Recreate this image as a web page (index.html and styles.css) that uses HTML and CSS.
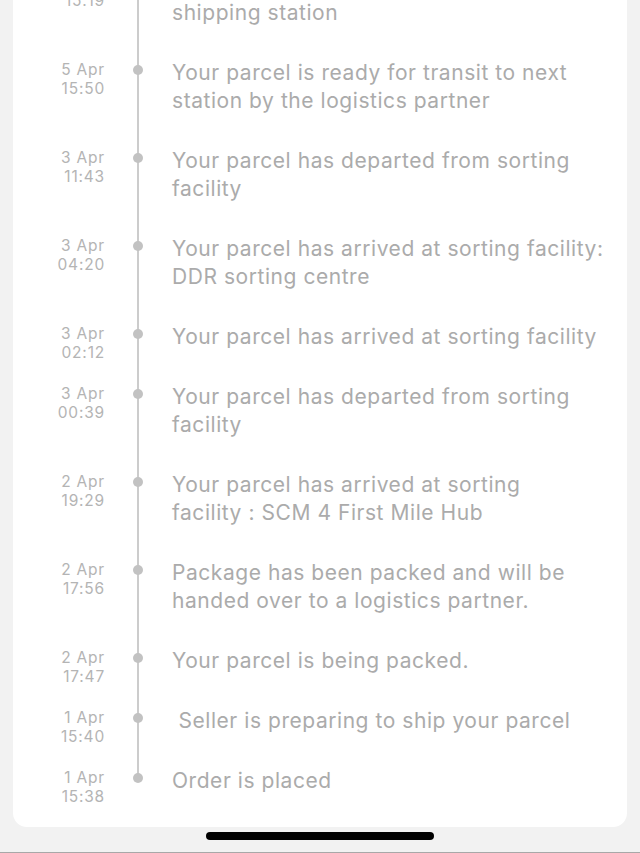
FILE: index.html
```html
<!DOCTYPE html>
<html lang="en">
<head>
    <meta charset="UTF-8">
    <meta name="viewport" content="width=device-width, initial-scale=1.0">
    <title>Parcel Tracking</title>
    <link rel="stylesheet" href="styles.css">
</head>
<body>
    <div class="card">
        <div class="event">
            <div class="date">5 Apr<br>15:19</div>
            <div class="track"><span class="dot"></span></div>
            <div class="message">Your parcel has arrived at first mile shipping station</div>
        </div>
        <div class="event">
            <div class="date">5 Apr<br>15:50</div>
            <div class="track"><span class="dot"></span></div>
            <div class="message">Your parcel is ready for transit to next station by the logistics partner</div>
        </div>
        <div class="event">
            <div class="date">3 Apr<br>11:43</div>
            <div class="track"><span class="dot"></span></div>
            <div class="message">Your parcel has departed from sorting facility</div>
        </div>
        <div class="event">
            <div class="date">3 Apr<br>04:20</div>
            <div class="track"><span class="dot"></span></div>
            <div class="message">Your parcel has arrived at sorting facility: DDR sorting centre</div>
        </div>
        <div class="event">
            <div class="date">3 Apr<br>02:12</div>
            <div class="track"><span class="dot"></span></div>
            <div class="message">Your parcel has arrived at sorting facility</div>
        </div>
        <div class="event">
            <div class="date">3 Apr<br>00:39</div>
            <div class="track"><span class="dot"></span></div>
            <div class="message">Your parcel has departed from sorting facility</div>
        </div>
        <div class="event">
            <div class="date">2 Apr<br>19:29</div>
            <div class="track"><span class="dot"></span></div>
            <div class="message">Your parcel has arrived at sorting facility&nbsp;: SCM 4 First Mile Hub</div>
        </div>
        <div class="event">
            <div class="date">2 Apr<br>17:56</div>
            <div class="track"><span class="dot"></span></div>
            <div class="message">Package has been packed and will be handed over to a logistics partner.</div>
        </div>
        <div class="event">
            <div class="date">2 Apr<br>17:47</div>
            <div class="track"><span class="dot"></span></div>
            <div class="message">Your parcel is being packed.</div>
        </div>
        <div class="event">
            <div class="date">1 Apr<br>15:40</div>
            <div class="track"><span class="dot"></span></div>
            <div class="message">&nbsp;Seller is preparing to ship your parcel</div>
        </div>
        <div class="event last">
            <div class="date">1 Apr<br>15:38</div>
            <div class="track"><span class="dot"></span></div>
            <div class="message">Order is placed</div>
        </div>
    </div>

    <div class="home-bar">
        <div class="indicator"></div>
    </div>
</body>
</html>
```

FILE: styles.css
```css
body {
    margin: 0;
    background-color: #f2f2f2;
    font-family: Inter, "Noto Sans", sans-serif;
}
.card {
    margin: -29px 13px 0 13px;
    background-color: #ffffff;
    border-radius: 0 0 14px 14px;
}
.event {
    display: grid;
    grid-template-columns: 92px 67px 1fr;
    padding-bottom: 32px;
}
.date {
    max-height: 27px;
    padding-top: 1px;
    text-align: right;
    font-size: 15.5px;
    line-height: 19px;
    letter-spacing: 0.8px;
    color: #b4b4b4;
}
.track {
    position: relative;
}
.track::before {
    content: "";
    position: absolute;
    left: 32px;
    top: 0;
    bottom: -32px;
    width: 1.5px;
    background-color: #cccccc;
}
.event.last .track::before {
    bottom: auto;
    height: 11px;
}
.dot {
    position: absolute;
    left: 28px;
    top: 6px;
    width: 10px;
    height: 10px;
    border-radius: 50%;
    background-color: #c2c2c2;
}
.message {
    font-size: 21px;
    line-height: 28px;
    letter-spacing: 0.55px;
    color: #ababab;
    padding-right: 20px;
}
.home-bar {
    height: 25px;
    border-bottom: 1px solid #a8a8a8;
    display: flex;
    justify-content: center;
}
.indicator {
    margin-top: 5px;
    width: 228px;
    height: 8px;
    border-radius: 4px;
    background-color: #000000;
}
```
